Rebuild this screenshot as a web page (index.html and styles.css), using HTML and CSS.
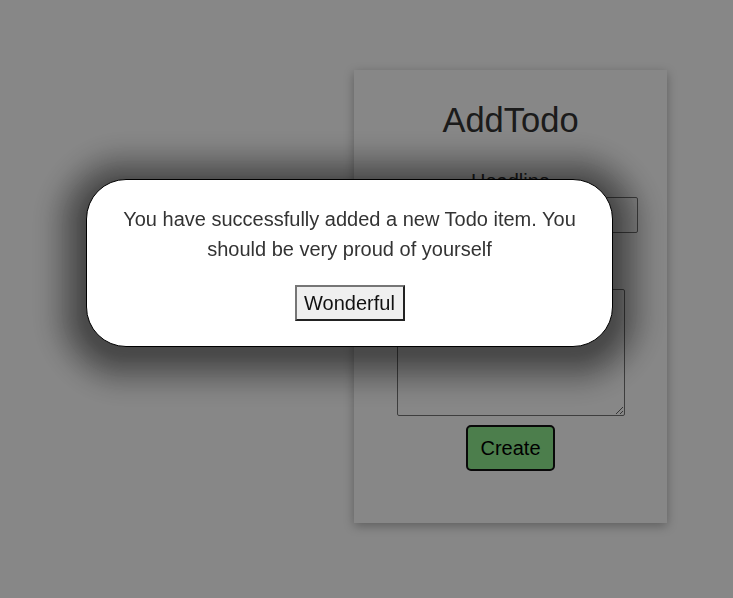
FILE: index.html
```html
<!DOCTYPE html>
<html lang="en">
<head>
<meta charset="utf-8">
<title>AddTodo</title>
<link rel="stylesheet" href="styles.css">
</head>
<body>
<main class="page">
  <form class="card">
    <h1 class="card-title">AddTodo</h1>
    <label class="field-label" for="headline">Headline</label>
    <input class="text-input" id="headline" type="text">
    <label class="field-label field-label-desc" for="description">Description</label>
    <textarea class="text-area" id="description"></textarea>
    <button class="create-btn" type="button">Create</button>
  </form>
</main>
<div class="overlay"></div>
<div class="modal">
  <p class="modal-text">You have successfully added a new Todo item. You should be very proud of yourself</p>
  <button class="modal-btn" type="button">Wonderful</button>
</div>
</body>
</html>
```
FILE: styles.css
```css
html, body {
  margin: 0;
  padding: 0;
  background: #ffffff;
  font-family: "Liberation Sans", Arial, sans-serif;
  color: #333333;
}

body {
  min-height: 598px;
}

.page {
  display: flex;
  padding: 70px 0 0 354px;
}

.card {
  width: 313px;
  height: 453px;
  box-sizing: border-box;
  padding-top: 31px;
  display: flex;
  flex-direction: column;
  align-items: center;
  background: #ffffff;
  box-shadow: 0 3px 10px rgba(0, 0, 0, 0.3);
}

.card-title {
  margin: 0;
  font-size: 34.5px;
  font-weight: 400;
  line-height: 39px;
  color: #333333;
}

.field-label {
  margin-top: 30px;
  font-size: 20px;
  line-height: 23px;
  color: #333333;
}

.field-label-desc {
  margin-top: 30px;
}

.text-input {
  margin-top: 4px;
  width: 255px;
  height: 36px;
  box-sizing: border-box;
  border: 1px solid #767676;
  border-radius: 2px;
  font-size: 20px;
}

.text-area {
  margin-top: 3px;
  width: 228px;
  height: 127px;
  box-sizing: border-box;
  border: 1px solid #767676;
  border-radius: 2px;
  font-size: 16px;
}

.create-btn {
  margin-top: 9px;
  width: 89px;
  height: 46px;
  padding: 0;
  font-family: "Liberation Sans", Arial, sans-serif;
  font-size: 20px;
  line-height: 22px;
  color: #000000;
  background: #90ee90;
  border: 2px solid #111111;
  border-radius: 5px;
}

.overlay {
  position: fixed;
  inset: 0;
  z-index: 1;
  background: rgba(0, 0, 0, 0.47);
}

.modal {
  position: absolute;
  z-index: 2;
  left: 86px;
  top: 179px;
  width: 527px;
  height: 168px;
  box-sizing: border-box;
  padding: 24px 30px 0;
  display: flex;
  flex-direction: column;
  align-items: center;
  background: #ffffff;
  border: 1px solid #000000;
  border-radius: 40px;
  box-shadow:
    0 6px 8px 5px rgba(0, 0, 0, 0.1),
    0 6px 8px 10px rgba(0, 0, 0, 0.09),
    0 6px 8px 15px rgba(0, 0, 0, 0.085),
    0 6px 8px 20px rgba(0, 0, 0, 0.08),
    0 6px 8px 25px rgba(0, 0, 0, 0.07),
    0 6px 8px 30px rgba(0, 0, 0, 0.06),
    0 6px 8px 35px rgba(0, 0, 0, 0.045),
    0 6px 8px 40px rgba(0, 0, 0, 0.04),
    0 6px 8px 45px rgba(0, 0, 0, 0.03),
    0 6px 8px 50px rgba(0, 0, 0, 0.02);
}

.modal-text {
  margin: 0;
  font-size: 20px;
  line-height: 30px;
  text-align: center;
  color: #333333;
}

.modal-btn {
  margin-top: 21px;
  width: 110px;
  height: 36px;
  padding: 0;
  font-family: "Liberation Sans", Arial, sans-serif;
  font-size: 20px;
  line-height: 24px;
  color: #111111;
  background: #efefef;
  border: 2px solid;
  border-color: #767676 #222222 #222222 #767676;
}
```
